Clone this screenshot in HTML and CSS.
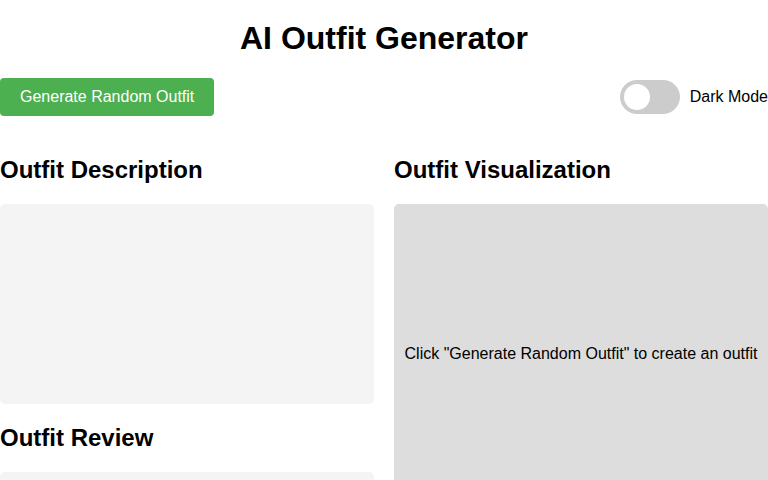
FILE: index.html
```html
<!DOCTYPE html>
<html lang="en">
<head>
<meta charset="utf-8">
<title>AI Outfit Generator</title>
<link rel="stylesheet" href="styles.css">
</head>
<body>
  <h1 class="title">AI Outfit Generator</h1>
  <div class="controls">
    <button class="gen-btn">Generate Random Outfit</button>
    <div class="mode">
      <label class="switch">
        <input type="checkbox">
        <span class="slider"></span>
      </label>
      <span class="mode-label">Dark Mode</span>
    </div>
  </div>
  <div class="columns">
    <div class="col">
      <h2 class="section-title">Outfit Description</h2>
      <div class="panel desc"></div>
      <h2 class="section-title">Outfit Review</h2>
      <div class="panel review"></div>
    </div>
    <div class="col">
      <h2 class="section-title">Outfit Visualization</h2>
      <div class="visual">Click "Generate Random Outfit" to create an outfit</div>
    </div>
  </div>
</body>
</html>
```
FILE: styles.css
```css
html, body {
  margin: 0;
  padding: 0;
  background: #fff;
  color: #000;
  font-family: "Liberation Sans", Arial, sans-serif;
}
.title {
  font-size: 32px;
  font-weight: bold;
  text-align: center;
  margin: 20px 0 21px;
  line-height: 37px;
}
.controls {
  display: flex;
  justify-content: space-between;
  align-items: center;
  margin-bottom: 20px;
}
.gen-btn {
  background: #4CAF50;
  color: #fff;
  border: none;
  border-radius: 4px;
  padding: 10px 20px;
  font-family: "Liberation Sans", Arial, sans-serif;
  font-size: 16px;
  line-height: 18px;
  cursor: pointer;
}
.mode {
  display: flex;
  align-items: center;
  gap: 10px;
}
.mode-label {
  font-size: 16px;
}
.switch {
  position: relative;
  display: inline-block;
  width: 60px;
  height: 34px;
}
.switch input {
  opacity: 0;
  width: 0;
  height: 0;
}
.slider {
  position: absolute;
  inset: 0;
  background: #ccc;
  border-radius: 34px;
}
.slider::before {
  content: "";
  position: absolute;
  left: 4px;
  bottom: 4px;
  width: 26px;
  height: 26px;
  background: #fff;
  border-radius: 50%;
}
.columns {
  display: grid;
  grid-template-columns: 1fr 1fr;
  gap: 20px;
}
.section-title {
  font-size: 24px;
  font-weight: bold;
  margin: 20px 0;
  line-height: 28px;
}
.panel {
  background: #f4f4f4;
  border-radius: 5px;
  height: 200px;
}
.visual {
  background: #ddd;
  border-radius: 5px;
  height: 300px;
  display: flex;
  align-items: center;
  justify-content: center;
  text-align: center;
  font-size: 16px;
}
```
